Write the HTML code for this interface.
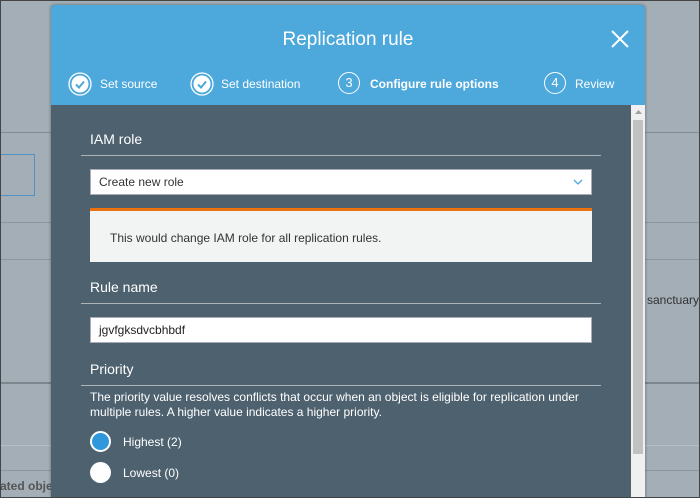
<!DOCTYPE html>
<html><head><style>
*{margin:0;padding:0;box-sizing:border-box}
html,body{width:700px;height:498px;overflow:hidden}
body{background:#a3aeb6;font-family:"Liberation Sans",Arial,sans-serif;position:relative}
.a{position:absolute}
.ln{position:absolute;left:0;height:1px;background:#8c989f}
.t{position:absolute;color:#fff;white-space:nowrap}
.c{position:absolute;width:22px;height:22px;border:1.5px solid #fff;border-radius:50%;color:#fff;font-size:13px;text-align:center;line-height:19px}
</style></head><body>
<div class="ln" style="top:132px;width:700px;background:#7e8c96"></div>
<div class="a" style="left:-2px;top:154px;width:37px;height:42px;border:1px solid #4f93c4"></div>
<div class="ln" style="top:222px;width:700px"></div>
<div class="ln" style="top:259px;width:700px"></div>
<div class="ln" style="top:382px;width:700px;height:2px;background:#7c878e"></div>
<div class="ln" style="top:445px;width:700px;background:#b5bec4"></div>
<div class="ln" style="top:470px;width:700px"></div>
<div class="t" style="left:647px;top:293px;color:#333;font-size:12px">sanctuary</div>
<div class="t" style="left:0;top:479px;color:#555;font-size:12px;font-weight:bold">ated obje</div>

<div class="a" style="left:51px;top:5px;width:594px;height:493px;background:#4d616f;border-radius:4px 4px 0 0;box-shadow:0 0 3px rgba(0,0,0,.4);overflow:hidden">
 <div class="a" style="left:0;top:0;width:594px;height:100px;background:#4da8dc"></div>
 <div class="t" style="left:0;width:594px;text-align:center;top:24px;font-size:19px">Replication rule</div>
 <svg class="a" style="left:560px;top:25px" width="18" height="18"><path d="M1 1L17 17M17 1L1 17" stroke="#fff" stroke-width="2"/></svg>
 <svg class="a" style="left:17px;top:67px" width="24" height="24"><circle cx="12" cy="12" r="11" fill="none" stroke="#fff" stroke-width="1.3"/><circle cx="12" cy="12" r="8.5" fill="#fff"/><path d="M8 12.5l3 3 5-6" fill="none" stroke="#4da8dc" stroke-width="2"/></svg>
 <div class="t" style="left:49px;top:72px;font-size:12px">Set source</div>
 <svg class="a" style="left:139px;top:67px" width="24" height="24"><circle cx="12" cy="12" r="11" fill="none" stroke="#fff" stroke-width="1.3"/><circle cx="12" cy="12" r="8.5" fill="#fff"/><path d="M8 12.5l3 3 5-6" fill="none" stroke="#4da8dc" stroke-width="2"/></svg>
 <div class="t" style="left:170px;top:72px;font-size:12px">Set destination</div>
 <div class="c" style="left:287px;top:67px">3</div>
 <div class="t" style="left:319px;top:72px;font-size:12px;font-weight:bold">Configure rule options</div>
 <div class="c" style="left:493px;top:67px">4</div>
 <div class="t" style="left:524px;top:72px;font-size:12px">Review</div>

 <div class="t" style="left:39px;top:126px;font-size:14px">IAM role</div>
 <div class="a" style="left:30px;top:150px;width:520px;height:1px;background:#aab4bb"></div>
 <div class="a" style="left:39px;top:164px;width:502px;height:26px;background:#fff;border:1px solid #aab"></div>
 <div class="t" style="left:48px;top:170px;font-size:12px;color:#333">Create new role</div>
 <svg class="a" style="left:522px;top:174px" width="10" height="7"><path d="M1 1l4 4 4-4" fill="none" stroke="#4da8dc" stroke-width="1.3"/></svg>
 <div class="a" style="left:39px;top:203px;width:502px;height:54px;background:#f2f3f3;border-top:3px solid #ec7211"></div>
 <div class="t" style="left:59px;top:226px;font-size:12px;color:#333">This would change IAM role for all replication rules.</div>

 <div class="t" style="left:39px;top:274px;font-size:14px">Rule name</div>
 <div class="a" style="left:30px;top:298px;width:520px;height:1px;background:#aab4bb"></div>
 <div class="a" style="left:39px;top:312px;width:502px;height:26px;background:#fff;border:1px solid #aab"></div>
 <div class="t" style="left:48px;top:318px;font-size:12px;color:#222">jgvfgksdvcbhbdf</div>

 <div class="t" style="left:39px;top:356px;font-size:14px">Priority</div>
 <div class="a" style="left:30px;top:380px;width:520px;height:1px;background:#aab4bb"></div>
 <div class="t" style="left:39px;top:385px;font-size:12px;line-height:15px">The priority value resolves conflicts that occur when an object is eligible for replication under<br>multiple rules. A higher value indicates a higher priority.</div>
 <div class="a" style="left:39px;top:426px;width:21px;height:21px;border-radius:50%;background:#2f97dc;border:2px solid #fff"></div>
 <div class="t" style="left:72px;top:430px;font-size:12px">Highest (2)</div>
 <div class="a" style="left:39px;top:457px;width:21px;height:21px;border-radius:50%;background:#fff"></div>
 <div class="t" style="left:72px;top:461px;font-size:12px">Lowest (0)</div>

 <div class="a" style="left:580px;top:100px;width:14px;height:400px;background:#f0f0f0"></div>
 <div class="a" style="left:582px;top:115px;width:10px;height:334px;background:#c1c1c1"></div>
 <svg class="a" style="left:583px;top:104px" width="9" height="6"><path d="M1 5L4.5 1 8 5z" fill="#a0a0a0"/></svg>
</div>
<div class="a" style="left:0;top:0;width:700px;height:498px;border:1px solid #444;pointer-events:none"></div>
</body></html>
